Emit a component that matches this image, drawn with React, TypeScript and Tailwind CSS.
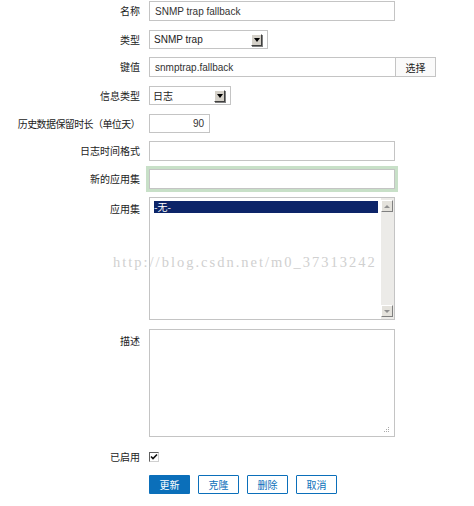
import React from "react";

const font = { fontFamily: '"Liberation Sans", "Noto Sans CJK SC", sans-serif' };

function Label({ children, top = false, tight = false }: { children: React.ReactNode; top?: boolean; tight?: boolean }) {
  return (
    <div
      className={`w-[140px] shrink-0 whitespace-nowrap text-right text-[10px] leading-none text-[#222] ${top ? "pt-[7px]" : ""} ${tight ? "tracking-[-0.6px]" : ""}`}
      style={{ fontFamily: '"Noto Sans CJK SC", sans-serif' }}
    >
      {children}
    </div>
  );
}

function ArrowBox() {
  return (
    <div className="flex h-[12px] w-[11px] items-center justify-center border border-t-white border-l-white border-b-[#404040] border-r-[#404040] bg-[#d4d0c8] shadow-[1px_1px_0_#808080]">
      <div className="h-0 w-0 border-l-[3px] border-r-[3px] border-t-[4px] border-l-transparent border-r-transparent border-t-black" />
    </div>
  );
}

function ScrollBtn({ up }: { up?: boolean }) {
  return (
    <div className="flex h-[12px] w-[12px] items-center justify-center border border-t-white border-l-white border-b-[#808080] border-r-[#808080] bg-[#e4e2dc]">
      {up ? (
        <div className="h-0 w-0 border-l-[3px] border-r-[3px] border-b-[3px] border-l-transparent border-r-transparent border-b-[#909090]" />
      ) : (
        <div className="h-0 w-0 border-l-[3px] border-r-[3px] border-t-[3px] border-l-transparent border-r-transparent border-t-[#909090]" />
      )}
    </div>
  );
}

export default function App() {
  return (
    <div className="relative h-[506px] w-[474px] bg-white" style={font}>
      <div className="flex flex-col">
        {/* 名称 */}
        <div className="mt-[1px] flex items-center gap-[9px]">
          <Label>名称</Label>
          <div className="flex h-[20px] w-[246px] items-center border border-[#c4c4c4] bg-white pl-[5px] text-[10px] text-[#333]">
            SNMP trap fallback
          </div>
        </div>
        {/* 类型 */}
        <div className="mt-[9px] flex items-center gap-[9px]">
          <Label>类型</Label>
          <div className="flex h-[19px] w-[119px] items-center justify-between border border-[#c4c4c4] bg-white pl-[4px] pr-[5px] text-[10px] text-[#222]">
            <span>SNMP trap</span>
            <ArrowBox />
          </div>
        </div>
        {/* 键值 */}
        <div className="mt-[8px] flex items-center gap-[9px]">
          <Label>键值</Label>
          <div className="flex">
            <div className="flex h-[20px] w-[247px] items-center border border-[#c4c4c4] bg-white pl-[5px] text-[10px] text-[#333]">
              snmptrap.fallback
            </div>
            <div
              className="flex h-[20px] w-[40px] items-center justify-center border border-l-0 border-[#c4c4c4] bg-[#fafafa] text-[10px] text-[#222]"
              style={{ fontFamily: '"Noto Sans CJK SC", sans-serif' }}
            >
              选择
            </div>
          </div>
        </div>
        {/* 信息类型 */}
        <div className="mt-[9px] flex items-center gap-[9px]">
          <Label>信息类型</Label>
          <div
            className="flex h-[19px] w-[82px] items-center justify-between border border-[#c4c4c4] bg-white pl-[3px] pr-[5px] text-[10px] text-[#222]"
            style={{ fontFamily: '"Noto Sans CJK SC", sans-serif' }}
          >
            <span>日志</span>
            <ArrowBox />
          </div>
        </div>
        {/* 历史 */}
        <div className="mt-[9px] flex items-center gap-[9px]">
          <Label tight>历史数据保留时长（单位天）</Label>
          <div className="flex h-[19px] w-[61px] items-center justify-end border border-[#c4c4c4] bg-white pr-[5px] text-[10px] text-[#333]">
            90
          </div>
        </div>
        {/* 日志时间格式 */}
        <div className="mt-[8px] flex items-center gap-[9px]">
          <Label>日志时间格式</Label>
          <div className="h-[20px] w-[246px] border border-[#c4c4c4] bg-white" />
        </div>
        {/* 新的应用集 */}
        <div className="mt-[8px] flex items-center gap-[9px]">
          <Label>新的应用集</Label>
          <div className="h-[20px] w-[246px] border border-[#c4c4c4] bg-white shadow-[0_0_0_3px_#c8e0c8]" />
        </div>
        {/* 应用集 */}
        <div className="mt-[8px] flex items-start gap-[9px]">
          <Label top>应用集</Label>
          <div className="flex h-[123px] w-[246px] border border-[#c4c4c4] bg-white">
            <div className="flex-1 pl-[4px] pr-[3px] pt-[3px]">
              <div
                className="h-[12px] bg-[#0c2468] text-[10px] leading-[12px] text-white"
                style={{ fontFamily: '"Noto Sans CJK SC", sans-serif' }}
              >
                -无-
              </div>
            </div>
            <div className="flex w-[13px] flex-col justify-between bg-[#ecebe8] py-[2px]">
              <ScrollBtn up />
              <ScrollBtn />
            </div>
          </div>
        </div>
        {/* 描述 */}
        <div className="mt-[9px] flex items-start gap-[9px]">
          <Label top>描述</Label>
          <div className="relative h-[108px] w-[246px] border border-[#c4c4c4] bg-white">
            <svg className="absolute bottom-[3px] right-[4px]" width="7" height="7" viewBox="0 0 7 7">
              <rect x="5" y="1" width="1" height="1" fill="#aaa" />
              <rect x="3" y="3" width="1" height="1" fill="#aaa" />
              <rect x="5" y="3" width="1" height="1" fill="#aaa" />
              <rect x="1" y="5" width="1" height="1" fill="#aaa" />
              <rect x="3" y="5" width="1" height="1" fill="#aaa" />
              <rect x="5" y="5" width="1" height="1" fill="#aaa" />
            </svg>
          </div>
        </div>
        {/* 已启用 */}
        <div className="mt-[15px] flex items-center gap-[9px]">
          <Label>已启用</Label>
          <div className="flex h-[10px] w-[10px] items-center justify-center border border-t-[#606060] border-l-[#606060] border-b-[#d0d0d0] border-r-[#d0d0d0] bg-white">
            <svg width="8" height="8" viewBox="0 0 8 8">
              <path d="M1 3.5 L3 5.5 L7 1.5" stroke="#111" strokeWidth="1.6" fill="none" />
            </svg>
          </div>
        </div>
        {/* Buttons */}
        <div
          className="ml-[149px] mt-[13px] flex gap-[8px] text-[10px]"
          style={{ fontFamily: '"Noto Sans CJK SC", sans-serif' }}
        >
          <div className="flex h-[19px] w-[41px] items-center justify-center rounded-[1px] bg-[#0b6fba] text-white">更新</div>
          <div className="flex h-[19px] w-[41px] items-center justify-center rounded-[1px] border border-[#0b6fba] bg-white text-[#0b6fba]">克隆</div>
          <div className="flex h-[19px] w-[41px] items-center justify-center rounded-[1px] border border-[#0b6fba] bg-white text-[#0b6fba]">删除</div>
          <div className="flex h-[19px] w-[41px] items-center justify-center rounded-[1px] border border-[#0b6fba] bg-white text-[#0b6fba]">取消</div>
        </div>
      </div>
      {/* watermark */}
      <div
        className="pointer-events-none absolute left-[113px] top-[252px] whitespace-nowrap text-[14.5px] leading-[20px] tracking-[2px] text-[#d0d0d0]"
        style={{ fontFamily: '"Liberation Serif", serif' }}
      >
        http://blog.csdn.net/m0_37313242
      </div>
    </div>
  );
}
